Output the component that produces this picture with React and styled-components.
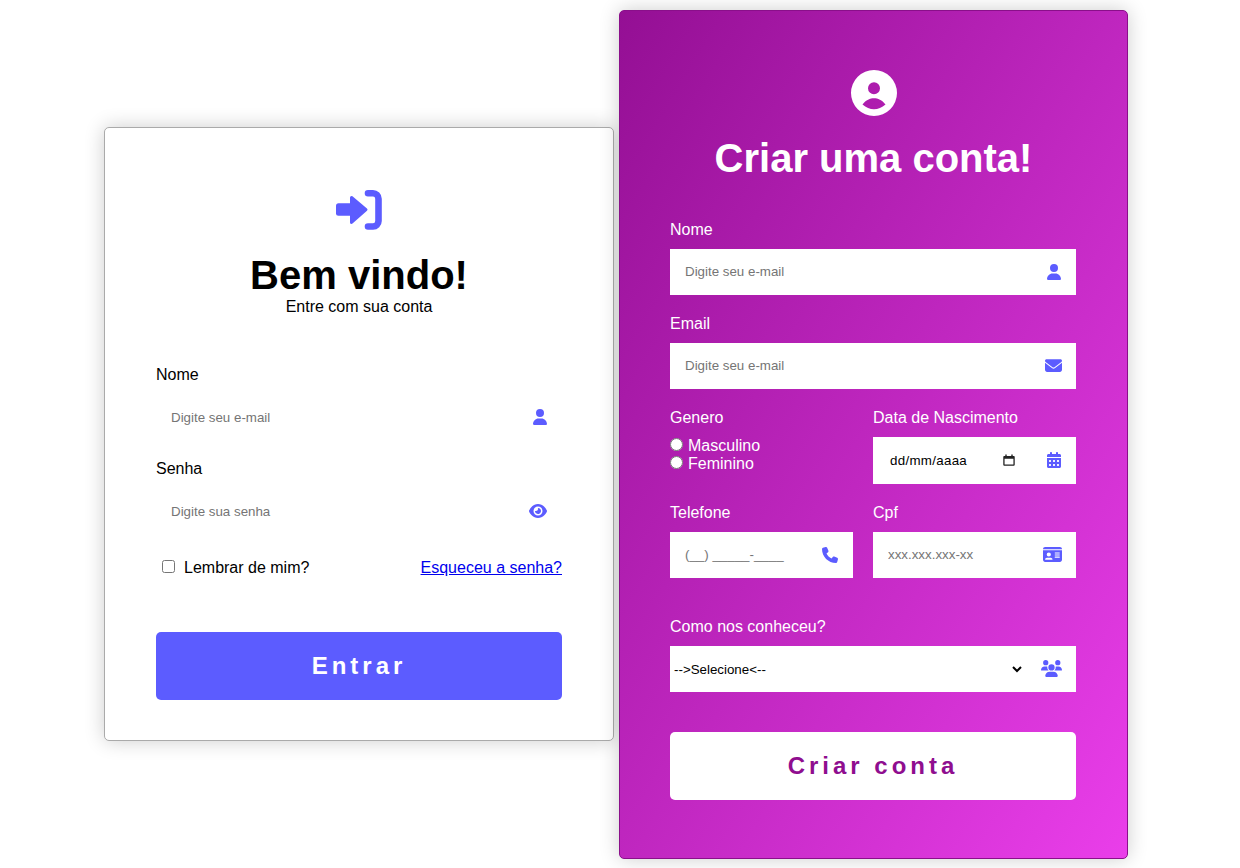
import styled, { createGlobalStyle } from 'styled-components'
import {
    FaUser,
    FaEye,
    FaEnvelope,
    FaCalendarDays,
    FaPhone,
    FaIdCard,
    FaUsers,
} from 'react-icons/fa6'

const GlobalStyle = createGlobalStyle`
    html, body {
        margin: 0;
        padding: 0;
        background: white;
    }
    * {
        box-sizing: border-box;
    }
    body, input, select, button {
        font-family: "Liberation Sans", Arial, sans-serif;
    }
`

const Page = styled.div`
    height: 868px;
    padding-left: 104px;
    display: flex;
    align-items: center;
    gap: 5px;
    overflow: hidden;
`

const Card = styled.div`
    width: ${(p) => (p.$dark ? '509px' : '510px')};
    padding: ${(p) => (p.$dark ? '59px 51px 58px 50px' : '59px 51px 40px')};
    border: 1px solid ${(p) => (p.$dark ? '#8a0f8a' : '#aaaaaa')};
    border-radius: 5px;
    color: ${(p) => (p.$dark ? 'white' : 'black')};
    background: ${(p) => (p.$dark ? 'linear-gradient(to bottom right, #940f94 0%, #ea3eea 100%)' : 'white')};
    box-shadow: 0 0 20px rgba(0, 0, 0, .2);
`

const Header = styled.div`
    text-align: center;
    margin-bottom: ${(p) => (p.$dark ? '40px' : '50px')};
    padding-left: ${(p) => (p.$dark ? '1px' : '0')};
    svg {
        display: block;
        margin: 0 auto;
    }
    h1 {
        font-size: 40px;
        line-height: 46px;
        font-weight: bold;
        margin: 19px 0 0;
    }
    p {
        font-size: 16px;
        line-height: 18px;
        margin: 0;
    }
`

const Field = styled.div`
    margin-top: ${(p) => p.$top || '0'};
    margin-bottom: ${(p) => p.$bottom || '20px'};
    min-width: 0;
`

const Label = styled.div`
    font-size: 16px;
    line-height: 18px;
    margin-bottom: 10px;
`

const InputBox = styled.div`
    height: ${(p) => p.$height || '46px'};
    padding-right: 14px;
    display: flex;
    align-items: center;
    color: #5c5cff;
    background: white;
    svg {
        flex-shrink: 0;
    }
`

const Input = styled.input`
    flex: 1;
    min-width: 0;
    height: 100%;
    padding: 0 15px;
    border: none;
    outline: none;
    font-size: 13.33px;
    color: black;
    background: transparent;
    &::placeholder {
        color: #757575;
    }
`

const Select = styled.select`
    flex: 1;
    min-width: 0;
    height: 100%;
    margin-right: 16px;
    padding-top: 1px;
    border: none;
    outline: none;
    font-size: 13.33px;
    color: black;
    background: transparent;
`

const DateText = styled.div`
    flex: 1;
    padding: 0 31px 0 17px;
    font-size: 13.33px;
    letter-spacing: .3px;
    color: black;
    display: flex;
    align-items: center;
    justify-content: space-between;
`

const OptionsRow = styled.div`
    display: flex;
    align-items: center;
    justify-content: space-between;
    font-size: 16px;
    line-height: 18px;
    margin: 25px 0 55px;
    a {
        color: #0000ee;
    }
`

const Remember = styled.label`
    display: flex;
    align-items: center;
    input {
        width: 13px;
        height: 13px;
        margin: -3px 9px 0 6px;
    }
`

const SubmitButton = styled.button`
    display: block;
    width: 100%;
    height: 68px;
    border: none;
    border-radius: 5px;
    font-size: 24px;
    font-weight: bold;
    letter-spacing: 4px;
    color: ${(p) => (p.$dark ? '#8f0e8f' : 'white')};
    background: ${(p) => (p.$dark ? 'white' : '#5c5cff')};
`

const TwoColumns = styled.div`
    display: grid;
    grid-template-columns: 183px 203px;
    column-gap: 20px;
`

const RadioRow = styled.label`
    display: flex;
    align-items: center;
    font-size: 16px;
    line-height: 18px;
    input {
        width: 13px;
        height: 13px;
        margin: -2px 5px 0 0;
    }
`

const EyeIcon = styled(FaEye)`
    margin-right: 1px;
`

const PhoneIcon = styled(FaPhone)`
    margin-right: 1px;
`

const LoginIcon = () => (
    <svg width="46" height="46" viewBox="0 -3 46 46" fill="#5c5cff" aria-hidden="true">
        <rect x="0" y="13.300" width="17" height="12.400" rx="2.500" />
        <path d="M15.500 7.500 L30 19.600 L15.500 32.500 Z" stroke="#5c5cff" strokeWidth="3" strokeLinejoin="round" />
        <path
            d="M32 3.300 H37 a5.500 5.500 0 0 1 5.500 5.500 V31 a5.500 5.500 0 0 1 -5.500 5.500 H32"
            fill="none"
            stroke="#5c5cff"
            strokeWidth="6.600"
            strokeLinecap="round"
        />
    </svg>
)

const AccountIcon = () => (
    <svg width="46" height="46" viewBox="0 0 46 46" aria-hidden="true">
        <path
            fill="white"
            fillRule="evenodd"
            d="M23 0a23 23 0 1 1 0 46a23 23 0 1 1 0-46zM23 12.300a6 6 0 1 0 0 12a6 6 0 1 0 0-12zM11.500 34.500C15 37.500 19 39.200 23 39.200C27 39.200 31 37.500 34.500 34.500C31 30 27 28.300 23 28.300C19 28.300 15 30 11.500 34.500z"
        />
    </svg>
)

const PickerIcon = () => (
    <svg width="12" height="13" viewBox="0.500 0.500 13 14" aria-hidden="true">
        <path
            fill="#222"
            d="M3 1h1.500v1.500h5V1H11v1.500h1.200c.6 0 1 .4 1 1v8.700c0 .6-.4 1-1 1H1.800c-.6 0-1-.4-1-1V3.500c0-.6.4-1 1-1H3V1zM2.200 5.500v6.300h9.600V5.500H2.200z"
        />
    </svg>
)

const App = () => {
    return (
        <>
            <GlobalStyle />
            <Page>
                <Card>
                    <Header>
                        <LoginIcon />
                        <h1>Bem vindo!</h1>
                        <p>Entre com sua conta</p>
                    </Header>
                    <Field>
                        <Label>Nome</Label>
                        <InputBox>
                            <Input placeholder="Digite seu e-mail" />
                            <FaUser size={16} />
                        </InputBox>
                    </Field>
                    <Field>
                        <Label>Senha</Label>
                        <InputBox>
                            <Input type="password" placeholder="Digite sua senha" />
                            <EyeIcon size={18} />
                        </InputBox>
                    </Field>
                    <OptionsRow>
                        <Remember>
                            <input type="checkbox" />
                            Lembrar de mim?
                        </Remember>
                        <a href="#senha">Esqueceu a senha?</a>
                    </OptionsRow>
                    <SubmitButton>Entrar</SubmitButton>
                </Card>

                <Card $dark>
                    <Header $dark>
                        <AccountIcon />
                        <h1>Criar uma conta!</h1>
                    </Header>
                    <Field>
                        <Label>Nome</Label>
                        <InputBox>
                            <Input placeholder="Digite seu e-mail" />
                            <FaUser size={16} />
                        </InputBox>
                    </Field>
                    <Field>
                        <Label>Email</Label>
                        <InputBox>
                            <Input placeholder="Digite seu e-mail" />
                            <FaEnvelope size={17} />
                        </InputBox>
                    </Field>
                    <TwoColumns>
                        <Field>
                            <Label>Genero</Label>
                            <RadioRow>
                                <input type="radio" name="genero" />
                                Masculino
                            </RadioRow>
                            <RadioRow>
                                <input type="radio" name="genero" />
                                Feminino
                            </RadioRow>
                        </Field>
                        <Field>
                            <Label>Data de Nascimento</Label>
                            <InputBox $height="47px">
                                <DateText>
                                    dd/mm/aaaa
                                    <PickerIcon />
                                </DateText>
                                <FaCalendarDays size={16} />
                            </InputBox>
                        </Field>
                        <Field>
                            <Label>Telefone</Label>
                            <InputBox>
                                <Input placeholder="(__) _____-____" />
                                <PhoneIcon size={16} />
                            </InputBox>
                        </Field>
                        <Field>
                            <Label>Cpf</Label>
                            <InputBox>
                                <Input placeholder="xxx.xxx.xxx-xx" />
                                <FaIdCard size={19} />
                            </InputBox>
                        </Field>
                    </TwoColumns>
                    <Field $top="20px" $bottom="40px">
                        <Label>Como nos conheceu?</Label>
                        <InputBox>
                            <Select defaultValue="">
                                <option value="">--&gt;Selecione&lt;--</option>
                            </Select>
                            <FaUsers size={21} />
                        </InputBox>
                    </Field>
                    <SubmitButton $dark>Criar conta</SubmitButton>
                </Card>
            </Page>
        </>
    )
}

export default App
